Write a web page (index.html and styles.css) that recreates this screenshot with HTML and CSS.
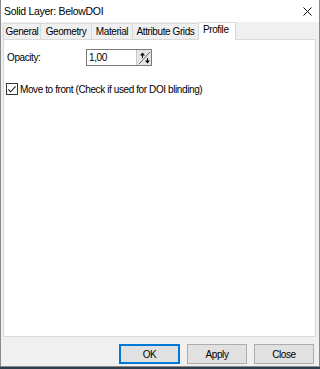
FILE: index.html
```html
<!DOCTYPE html>
<html>
<head>
<meta charset="utf-8">
<link rel="stylesheet" href="styles.css">
</head>
<body>
<div class="window">
  <div class="titlebar">
    <span class="title">Solid Layer: BelowDOI</span>
    <svg class="close" width="9" height="9" viewBox="0 0 9 9"><path d="M0.5 0.5 L8.5 8.5 M8.5 0.5 L0.5 8.5" stroke="#111" stroke-width="1"/></svg>
  </div>
  <div class="client">
    <div class="tabs">
      <div class="tab t1">General</div>
      <div class="tab t2">Geometry</div>
      <div class="tab t3">Material</div>
      <div class="tab t4">Attribute Grids</div>
      <div class="tab active">Profile</div>
    </div>
    <div class="panel">
      <div class="row">
        <span class="label">Opacity:</span>
        <div class="spin">
          <span class="val">1,00</span>
          <span class="spinbtn">
            <svg width="13" height="14" viewBox="0 0 13 14">
              <path d="M1 13 L12 1" stroke="#6b6b6b" stroke-width="1"/>
              <path d="M4.5 2 L4.5 7" stroke="#000" stroke-width="1"/>
              <path d="M2 4.5 L4.5 1.5 L7 4.5 Z" fill="#000"/>
              <path d="M9.5 7 L9.5 12" stroke="#000" stroke-width="1"/>
              <path d="M7 9.5 L9.5 12.5 L12 9.5 Z" fill="#000"/>
            </svg>
          </span>
        </div>
      </div>
      <label class="check">
        <span class="box">
          <svg width="11" height="11" viewBox="0 0 11 11"><path d="M1.5 5.5 L4 8 L9.5 2" fill="none" stroke="#222" stroke-width="1.2"/></svg>
        </span>
        <span>Move to front (Check if used for DOI blinding)</span>
      </label>
    </div>
    <div class="footer">
      <button class="btn default">OK</button>
      <button class="btn">Apply</button>
      <button class="btn">Close</button>
    </div>
  </div>
</div>
</body>
</html>
```

FILE: styles.css
```css
html, body {
  margin: 0;
  padding: 0;
}
body {
  width: 320px;
  height: 369px;
  background: #2f3e4c;
  font-family: "Liberation Sans", Arial, sans-serif;
  font-size: 10px;
  letter-spacing: -0.4px;
  color: #000;
  overflow: hidden;
}
.window {
  box-sizing: border-box;
  width: 320px;
  height: 367px;
  background: #f0f0f0;
  border: 1px solid #8a8a8a;
  border-top: none;
  display: flex;
  flex-direction: column;
}
.titlebar {
  height: 22px;
  background: #fff;
  display: flex;
  align-items: center;
  justify-content: space-between;
  padding: 0 7px 0 3px;
  flex: none;
}
.title {
  font-size: 10.5px;
  letter-spacing: -0.3px;
}
.close {
  display: block;
}
.client {
  flex: 1;
  display: flex;
  flex-direction: column;
  padding: 0 2px 0 2px;
}
.tabs {
  display: flex;
  height: 16px;
  margin-top: 1px;
  align-items: flex-end;
}
.tab {
  box-sizing: border-box;
  height: 16px;
  border: 1px solid #d9d9d9;
  border-bottom: none;
  border-right: none;
  background: #f0f0f0;
  line-height: 15px;
  white-space: nowrap;
  text-align: center;
  flex: none;
}
.t1 { width: 37px; }
.t2 { width: 51px; }
.t3 { width: 41px; }
.t4 { width: 67px; border-right: 1px solid #d9d9d9; }
.tab.active {
  width: 37px;
  height: 18px;
  margin-bottom: -1px;
  margin-top: -2px;
  background: #fff;
  border: 1px solid #d9d9d9;
  border-bottom: none;
  border-left: none;
  text-align: left;
  padding-left: 4px;
  line-height: 14px;
  position: relative;
  z-index: 1;
}
.panel {
  box-sizing: border-box;
  height: 298px;
  width: 313px;
  background: #fff;
  border: 1px solid #d9d9d9;
  padding: 9px 0 0 3px;
  flex: none;
}
.row {
  display: flex;
  align-items: center;
  height: 17px;
}
.label {
  width: 79px;
  flex: none;
}
.spin {
  box-sizing: border-box;
  width: 66px;
  height: 17px;
  flex: none;
  border: 1px solid #7a7a7a;
  display: flex;
  align-items: center;
  justify-content: space-between;
  padding-left: 2px;
}
.spinbtn {
  width: 14px;
  height: 15px;
  background: #e6e6e6;
  border-left: 1px solid #c8c8c8;
  display: flex;
  align-items: center;
  justify-content: center;
}
.spinbtn svg { display: block; }
.check {
  display: flex;
  align-items: center;
  margin-top: 17px;
  margin-left: -1px;
  gap: 2px;
}
.box {
  box-sizing: border-box;
  width: 12px;
  height: 12px;
  border: 1px solid #333;
  background: #fff;
  display: flex;
  align-items: center;
  justify-content: center;
}
.box svg { display: block; }
.footer {
  flex: 1;
  display: flex;
  justify-content: flex-end;
  align-items: flex-start;
  gap: 7px;
  padding: 7px 3px 0 0;
}
.btn {
  box-sizing: border-box;
  width: 60px;
  height: 20px;
  background: #e1e1e1;
  border: 1px solid #adadad;
  font-family: "Liberation Sans", Arial, sans-serif;
  font-size: 10px;
  letter-spacing: -0.4px;
  color: #000;
  padding: 0;
  margin: 0;
}
.btn.default {
  width: 61px;
  border: 2px solid #0078d7;
}
```
